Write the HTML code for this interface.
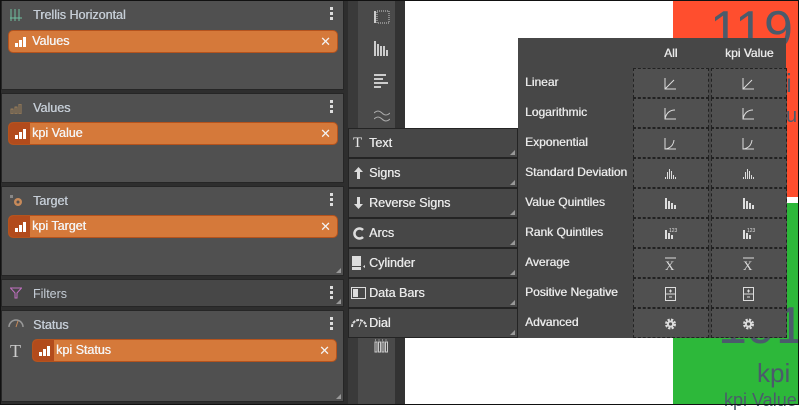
<!DOCTYPE html>
<html><head><meta charset="utf-8"><style>
*{box-sizing:border-box;margin:0;padding:0}
body{width:799px;height:405px;overflow:hidden;background:#fff;font-family:"Liberation Sans",sans-serif;position:relative}
.a{position:absolute}
.frame{left:0;top:0;width:799px;height:405px;border:1px solid #111;z-index:50;pointer-events:none}
.left{left:0;top:0;width:348px;height:405px;background:#2e2e2e}
.panel{position:absolute;left:1px;width:343px;background:#505050;border:1px solid #262626}
.ph{position:absolute;left:31px;top:7px;color:#c5cdd6;font-size:12.5px;text-shadow:0.4px 0 0 currentColor}
.dots{position:absolute;right:10px;top:6px;width:3px}
.dots i{display:block;width:3px;height:3px;background:#ddd;margin-bottom:2px}
.chip{position:absolute;height:23px;background:#d5793a;border:1px solid #b5531d;border-radius:5px;color:#f4f4f4;font-size:12.5px;text-shadow:0.4px 0 0 currentColor;line-height:21px}
.chip .ic{position:absolute;left:0;top:0;bottom:0;width:21px;border-radius:4px 0 0 4px}
.chip .x{position:absolute;right:6px;top:0;font-size:13px;text-shadow:none}
.bars{position:absolute;left:6px;top:6px;width:12px;height:10px}
.bars b{position:absolute;bottom:0;width:3px;background:#fff}
.tool{left:358px;top:0;width:37px;height:405px;background:#4a4a4a}
.menu{left:348px;width:170px;height:30px;background:#474747;border:1px solid #242424;color:#e8e8e8;font-size:12.5px;text-shadow:0.4px 0 0 currentColor;line-height:28px;padding-left:20px}
.corner{position:absolute;right:2px;bottom:2px;width:0;height:0;border-left:5px solid transparent;border-bottom:5px solid #999}
.tbl{left:518px;top:38px;width:268px;height:300px;background:#474747}
.row{position:absolute;left:7px;color:#e8e8e8;font-size:12px;text-shadow:0.4px 0 0 currentColor}
.cell{position:absolute;width:76px;height:30px;border:1px dashed #222;background:#505050}
.cell svg{position:absolute;left:30px;top:8px}
</style></head><body>
<div class="a frame"></div>
<div class="a left"></div>
<div class="panel" style="top:0;height:90px">
 <svg class="a" style="left:8px;top:8px" width="12" height="12"><path d="M1 0v12M5 0v12M9 0v12M0 9h12" stroke="#6fbfa0" stroke-width="1"/></svg>
 <div class="ph">Trellis Horizontal</div><div class="dots"><i></i><i></i><i></i></div>
</div>
<div class="chip" style="left:8px;top:30px;width:330px"><div class="bars"><b style="left:0;height:4px"></b><b style="left:4px;height:7px"></b><b style="left:8px;height:10px"></b></div><span style="padding-left:23px">Values</span><span class="x">✕</span></div>

<div class="panel" style="top:93px;height:90px">
 <svg class="a" style="left:8px;top:10px" width="12" height="10"><path d="M1 5h2v5h-2zM5 3h2v7h-2zM9 0h2v10h-2z" stroke="#b08a5a" fill="none" stroke-width="0.8"/></svg>
 <div class="ph">Values</div><div class="dots"><i></i><i></i><i></i></div>
</div>
<div class="chip" style="left:8px;top:122px;width:330px"><div class="ic" style="background:#b24b1c"></div><div class="bars"><b style="left:0;height:4px"></b><b style="left:4px;height:7px"></b><b style="left:8px;height:10px"></b></div><span style="padding-left:23px">kpi Value</span><span class="x">✕</span></div>

<div class="panel" style="top:186px;height:90px">
 <svg class="a" style="left:7px;top:6px" width="14" height="14"><circle cx="9" cy="9" r="4" fill="#c78a5a"/><circle cx="9" cy="9" r="1.5" fill="#505050"/><rect x="1" y="2" width="3" height="3" fill="#888"/></svg>
 <div class="ph">Target</div><div class="dots"><i></i><i></i><i></i></div><div class="corner"></div>
</div>
<div class="chip" style="left:8px;top:215px;width:330px"><div class="ic" style="background:#b24b1c"></div><div class="bars"><b style="left:0;height:4px"></b><b style="left:4px;height:7px"></b><b style="left:8px;height:10px"></b></div><span style="padding-left:23px">kpi Target</span><span class="x">✕</span></div>

<div class="panel" style="top:279px;height:28px;background:#474747">
 <svg class="a" style="left:8px;top:7px" width="12" height="12"><path d="M0.5 1h11L7 6v5H5V6z" stroke="#c070c0" fill="none"/></svg>
 <div class="ph" style="text-shadow:none">Filters</div><div class="dots"><i></i><i></i><i></i></div><div class="corner"></div>
</div>

<div class="panel" style="top:310px;height:92px">
 <svg class="a" style="left:6px;top:7px" width="16" height="10"><path d="M1 9A7 7 0 0 1 15 9" stroke="#999" fill="none" stroke-width="1.5"/><path d="M8 9L10 3" stroke="#c78a5a"/></svg>
 <div class="ph">Status</div><div class="dots"><i></i><i></i><i></i></div><div class="corner"></div>
 <div class="a" style="left:8px;top:30px;color:#ccc;font-family:'Liberation Serif',serif;font-size:18px">T</div>
</div>
<div class="chip" style="left:32px;top:339px;width:305px"><div class="ic" style="background:#b24b1c"></div><div class="bars"><b style="left:0;height:4px"></b><b style="left:4px;height:7px"></b><b style="left:8px;height:10px"></b></div><span style="padding-left:23px">kpi Status</span><span class="x">✕</span></div>

<div class="a" style="left:348px;top:0;width:10px;height:405px;background:#3a3a3a"></div>
<div class="a tool"></div>
<div class="a" style="left:395px;top:0;width:10px;height:405px;background:#333"></div>
<svg class="a" style="left:374px;top:9px" width="16" height="16"><g fill="#ccc"><rect x="0" y="2" width="2" height="12"/><rect x="3" y="2" width="12" height="12" fill="none" stroke="#ccc" stroke-dasharray="1 1"/></g></svg>
<svg class="a" style="left:374px;top:41px" width="16" height="17"><g fill="#ccc"><rect x="0" y="0" width="2" height="15"/><rect x="3" y="3" width="2" height="12"/><rect x="6" y="5" width="2" height="10"/><rect x="9" y="5" width="2" height="10"/><rect x="12" y="9" width="2" height="6"/></g></svg>
<svg class="a" style="left:374px;top:74px" width="16" height="16"><g fill="#ccc"><rect y="0" width="12" height="2"/><rect y="4" width="9" height="2"/><rect y="8" width="14" height="2"/><rect y="12" width="7" height="2"/></g></svg>
<svg class="a" style="left:374px;top:108px" width="16" height="14"><path d="M0 5q4-4 8 0t8 0M0 11q4-4 8 0t8 0" stroke="#aaa" fill="none"/></svg>
<svg class="a" style="left:374px;top:339px" width="14" height="14"><g stroke="#ccc" fill="none"><rect x="1" y="3" width="2" height="10"/><rect x="4.5" y="3" width="2" height="10"/><rect x="8" y="3" width="2" height="10"/><rect x="11.5" y="3" width="2" height="10"/></g><path d="M1 1h13" stroke="#ccc" stroke-dasharray="1 2.5"/></svg>

<div class="a" style="left:673px;top:0;width:126px;height:197px;background:#ff4e2e"></div>
<div class="a" style="left:673px;top:203px;width:126px;height:202px;background:#2db83a"></div>
<div class="a" style="left:710px;top:4px;font-size:52px;color:#4b5b6b;line-height:52px">119</div>
<div class="a" style="left:786px;top:68px;font-size:26px;color:#4b5b6b">i</div>
<div class="a" style="left:786px;top:105px;font-size:20px;color:#4b5b6b">u</div>
<div class="a" style="left:718px;top:300px;font-size:52px;color:#4b5b6b;line-height:52px">191</div>
<div class="a" style="left:757px;top:358px;font-size:26px;color:#4b5b6b">kpi</div>
<div class="a" style="left:724px;top:390px;font-size:18px;color:#4b5b6b">kpi Value</div>

<div class="a menu" style="top:128px">Text<span class="a" style="left:4px;top:0;font-family:'Liberation Serif',serif;text-shadow:none;font-size:15px">T</span><div class="corner"></div></div>
<div class="a menu" style="top:158px">Signs<svg class="a" style="left:5px;top:8px" width="9" height="12"><path d="M4.5 0L9 5H6v7H3V5H0z" fill="#ddd"/></svg><div class="corner"></div></div>
<div class="a menu" style="top:188px">Reverse Signs<svg class="a" style="left:5px;top:8px" width="9" height="12"><path d="M4.5 12L9 7H6V0H3v7H0z" fill="#ddd"/></svg><div class="corner"></div></div>
<div class="a menu" style="top:218px">Arcs<svg class="a" style="left:3px;top:8px" width="13" height="13"><path d="M11 3A5 5 0 1 0 11 10" stroke="#ddd" stroke-width="2.5" fill="none"/></svg><div class="corner"></div></div>
<div class="a menu" style="top:248px">Cylinder<svg class="a" style="left:3px;top:7px" width="16" height="15"><rect x="0" y="0" width="9" height="10" fill="#ddd"/><rect x="0" y="11" width="9" height="3" fill="#ddd"/><path d="M13 9l-2 1.5 2 1.5z" fill="#ddd"/></svg><div class="corner"></div></div>
<div class="a menu" style="top:278px">Data Bars<svg class="a" style="left:2px;top:8px" width="16" height="13"><rect x="0.5" y="0.5" width="14" height="11" stroke="#ddd" fill="none"/><rect x="2" y="2" width="5" height="8" fill="#ddd"/></svg><div class="corner"></div></div>
<div class="a menu" style="top:308px">Dial<svg class="a" style="left:2px;top:10px" width="16" height="9"><path d="M1 8A7 7 0 0 1 15 8" stroke="#ddd" stroke-width="2" fill="none" stroke-dasharray="3 1"/><path d="M8 8L10 3" stroke="#ddd"/></svg><div class="corner"></div></div>

<div class="a tbl">
 <div class="row" style="left:146px;top:8px">All</div>
 <div class="row" style="left:207px;top:8px">kpi Value</div>
 <div class="row" style="top:37px">Linear</div>
 <div class="row" style="top:67px">Logarithmic</div>
 <div class="row" style="top:97px">Exponential</div>
 <div class="row" style="top:127px">Standard Deviation</div>
 <div class="row" style="top:157px">Value Quintiles</div>
 <div class="row" style="top:187px">Rank Quintiles</div>
 <div class="row" style="top:217px">Average</div>
 <div class="row" style="top:247px">Positive Negative</div>
 <div class="row" style="top:277px">Advanced</div>
</div>
<div id="cells"></div>
<script>
var icons=[
'<path d="M1 1v11h11M1 12L10 3" stroke="#ddd" fill="none"/>',
'<path d="M1 1v11h11M1 12Q3 3 11 3" stroke="#ddd" fill="none"/>',
'<path d="M1 1v11h11M1 12Q9 11 10 3" stroke="#ddd" fill="none"/>',
'<g fill="#ddd"><rect x="5" y="2" width="1" height="10"/><rect x="3" y="5" width="1" height="7"/><rect x="7" y="4" width="1" height="8"/><rect x="9" y="8" width="1" height="4"/><rect x="1" y="10" width="1" height="2"/><rect x="11" y="10" width="1" height="2"/></g>',
'<g fill="#ddd"><rect x="1" y="1" width="2" height="11"/><rect x="4" y="4" width="2" height="8"/><rect x="7" y="6" width="2" height="6"/><rect x="10" y="8" width="2" height="4"/></g>',
'<g fill="#ddd"><rect x="1" y="3" width="2" height="9"/><rect x="4" y="6" width="2" height="6"/><rect x="7" y="8" width="2" height="4"/><text x="5" y="5" font-size="5" fill="#ddd" font-family="Liberation Sans">123</text></g>',
'<path d="M1 1h11" stroke="#ddd"/><text x="1" y="13" font-size="13" fill="#ddd" font-family="Liberation Serif">X</text>',
'<rect x="1.5" y="0.5" width="10" height="13" stroke="#ddd" fill="none"/><path d="M1.5 7h10M5 4h3M6.5 2.5v3M5 10h3" stroke="#ddd"/>',
'<circle cx="6.5" cy="7" r="4" fill="none" stroke="#ddd" stroke-width="3" stroke-dasharray="2 1.2"/><circle cx="6.5" cy="7" r="3.5" fill="#ddd"/><circle cx="6.5" cy="7" r="1.6" fill="#505050"/>'];
var h='';
for(var r=0;r<9;r++){for(var c=0;c<2;c++){h+='<div class="a cell" style="left:'+(633+c*78)+'px;top:'+(68+r*30)+'px"><svg width="14" height="14">'+icons[r]+'</svg></div>';}}
document.getElementById('cells').innerHTML=h;
</script>
</body></html>
